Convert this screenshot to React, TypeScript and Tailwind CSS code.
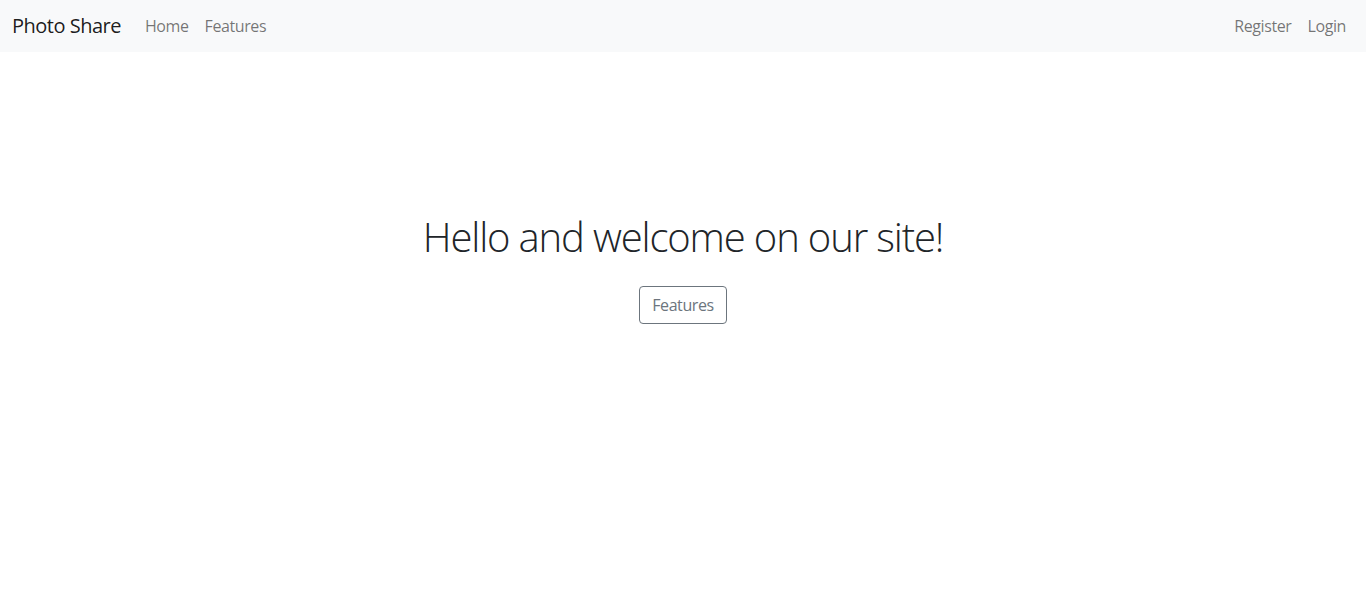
export default function App() {
  return (
    <main className="min-h-screen flex flex-col bg-white font-['Open_Sans',sans-serif] text-[#212529]">
      {/* Navbar */}
      <header className="h-[52px] bg-[#f8f9fa] px-3 flex items-center justify-between">
        <div className="flex items-center">
          <a href="#" className="text-[20px] tracking-[-0.5px] text-black/90 mr-4">
            Photo Share
          </a>
          <nav className="flex items-center tracking-[-0.4px]">
            <a href="#" className="px-2 text-base text-black/55">
              Home
            </a>
            <a href="#" className="px-2 text-base text-black/55">
              Features
            </a>
          </nav>
        </div>
        <nav className="flex items-center tracking-[-0.4px]">
          <a href="#" className="px-2 text-base text-black/55">
            Register
          </a>
          <a href="#" className="px-2 text-base text-black/55">
            Login
          </a>
        </nav>
      </header>

      {/* Hero */}
      <section className="flex flex-col items-center pt-[161px]">
        <h1 className="text-[40px] leading-[1.2] font-light tracking-[-1.15px]">Hello and welcome on our site!</h1>
        <a
          href="#"
          className="mt-[25px] px-3 py-1.5 text-base leading-6 tracking-[-0.4px] text-[#6c757d] border border-[#6c757d] rounded"
        >
          Features
        </a>
      </section>
    </main>
  )
}
